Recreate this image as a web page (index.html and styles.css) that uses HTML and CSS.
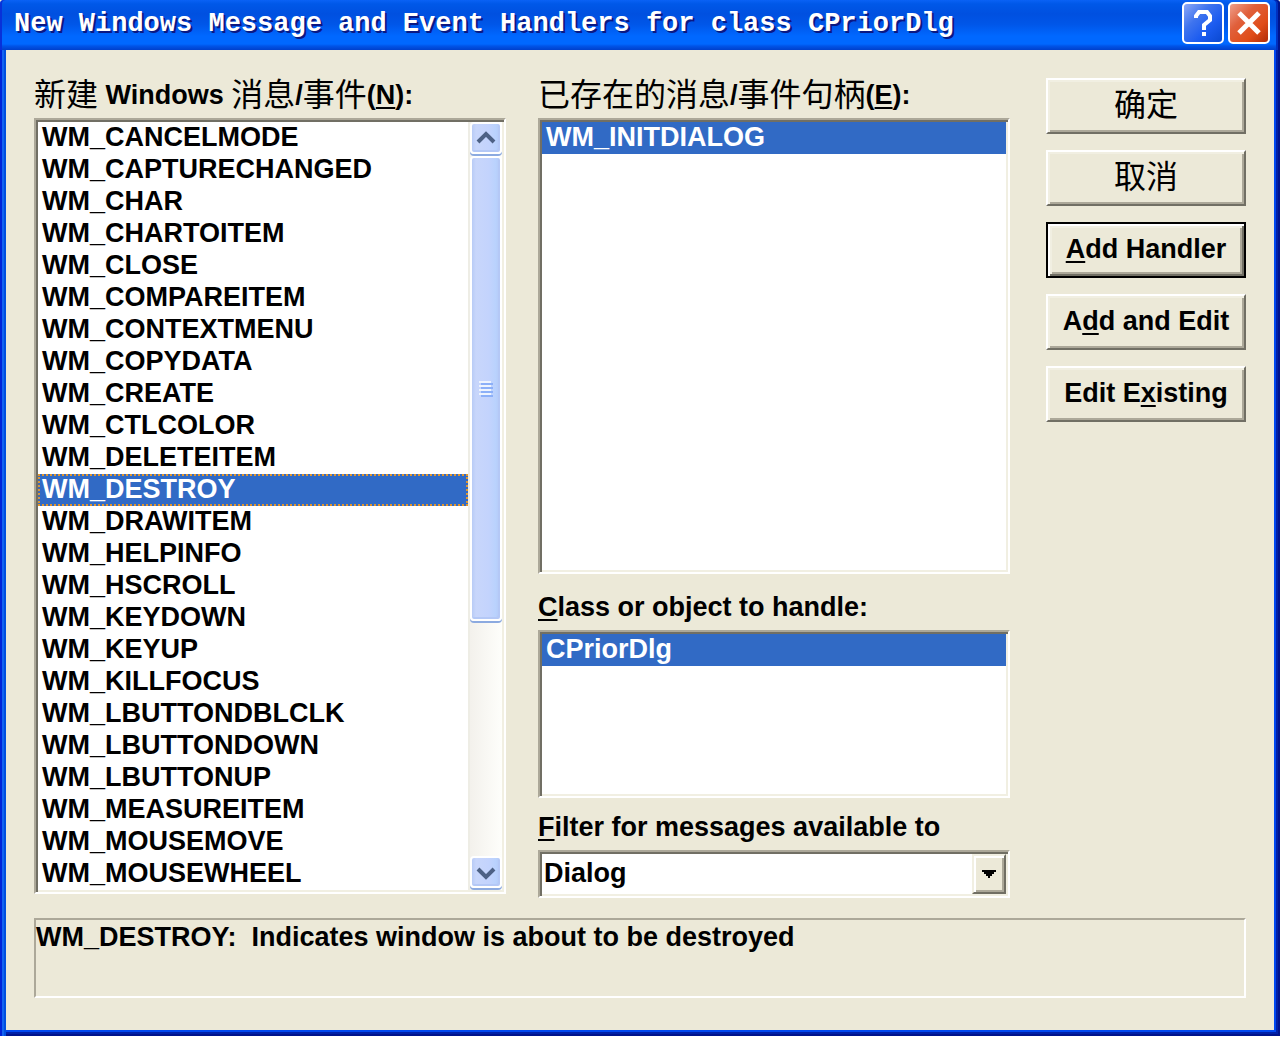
FILE: index.html
```html
<!DOCTYPE html>
<html lang="zh-CN">
<head>
    <meta charset="UTF-8">
    <meta name="viewport" content="width=device-width, initial-scale=1.0">
    <title>New Windows Message and Event Handlers for class CPriorDlg</title>
    <link rel="stylesheet" href="styles.css">
</head>
<body>
    <div class="dialog">
        <div class="title-bar">
            <h1>New Windows Message and Event Handlers for class CPriorDlg</h1>
            <button type="button" class="title-btn help" aria-label="Help">
                <svg viewBox="0 0 38 38" width="38" height="38">
                    <path d="M12 14V12L15 8H23L26 12V16L20 21V26" fill="none" stroke="#fff" stroke-width="4"/>
                    <rect x="18" y="28" width="4" height="4" fill="#fff"/>
                </svg>
            </button>
            <button type="button" class="title-btn close" aria-label="Close">
                <svg viewBox="0 0 38 38" width="38" height="38">
                    <path d="M9 9L29 29M29 9L9 29" fill="none" stroke="#fff" stroke-width="5"/>
                </svg>
            </button>
        </div>
        <form class="dialog-body">
            <div class="main">
                <div class="columns">
                    <div class="column">
                        <label class="label-top" for="new-messages"><span class="cjk">新建</span> Windows <span class="cjk">消息</span>/<span class="cjk">事件</span>(<u>N</u>):</label>
                        <div class="sunken">
                            <select id="new-messages" class="list long" size="24" accesskey="n">
                                <option>WM_CANCELMODE</option>
                                <option>WM_CAPTURECHANGED</option>
                                <option>WM_CHAR</option>
                                <option>WM_CHARTOITEM</option>
                                <option>WM_CLOSE</option>
                                <option>WM_COMPAREITEM</option>
                                <option>WM_CONTEXTMENU</option>
                                <option>WM_COPYDATA</option>
                                <option>WM_CREATE</option>
                                <option>WM_CTLCOLOR</option>
                                <option>WM_DELETEITEM</option>
                                <option selected>WM_DESTROY</option>
                                <option>WM_DRAWITEM</option>
                                <option>WM_HELPINFO</option>
                                <option>WM_HSCROLL</option>
                                <option>WM_KEYDOWN</option>
                                <option>WM_KEYUP</option>
                                <option>WM_KILLFOCUS</option>
                                <option>WM_LBUTTONDBLCLK</option>
                                <option>WM_LBUTTONDOWN</option>
                                <option>WM_LBUTTONUP</option>
                                <option>WM_MEASUREITEM</option>
                                <option>WM_MOUSEMOVE</option>
                                <option>WM_MOUSEWHEEL</option>
                            </select>
                            <div class="scrollbar">
                                <button type="button" class="scroll-btn" aria-label="Scroll up">
                                    <svg viewBox="0 0 26 26" width="26" height="26"><path d="M5 17L13 9L21 17" fill="none" stroke="#4d6185" stroke-width="4"/></svg>
                                </button>
                                <div class="thumb">
                                    <svg viewBox="0 0 14 16" width="14" height="16">
                                        <path d="M0 1H12M0 5H12M0 9H12M0 13H12" stroke="#eef4fe" stroke-width="2"/>
                                        <path d="M2 3H14M2 7H14M2 11H14M2 15H14" stroke="#8cb0f8" stroke-width="2"/>
                                    </svg>
                                </div>
                                <div class="track"></div>
                                <button type="button" class="scroll-btn" aria-label="Scroll down">
                                    <svg viewBox="0 0 26 26" width="26" height="26"><path d="M5 10L13 18L21 10" fill="none" stroke="#4d6185" stroke-width="4"/></svg>
                                </button>
                            </div>
                        </div>
                    </div>
                    <div class="column">
                        <label class="label-top" for="handlers"><span class="cjk">已存在的消息</span>/<span class="cjk">事件句柄</span>(<u>E</u>):</label>
                        <div class="sunken">
                            <select id="handlers" class="list medium" size="14" accesskey="e">
                                <option selected>WM_INITDIALOG</option>
                            </select>
                        </div>
                        <label class="label-class" for="class-list"><u>C</u>lass or object to handle:</label>
                        <div class="sunken">
                            <select id="class-list" class="list short" size="5" accesskey="c">
                                <option selected>CPriorDlg</option>
                            </select>
                        </div>
                        <label class="label-filter" for="filter"><u>F</u>ilter for messages available to</label>
                        <div class="sunken combo">
                            <select id="filter" accesskey="f">
                                <option>Dialog</option>
                            </select>
                            <span class="combo-arrow">
                                <svg viewBox="0 0 14 8" width="14" height="8"><path d="M0 0H14V2H12V4H10V6H8V8H6V6H4V4H2V2H0Z"/></svg>
                            </span>
                        </div>
                    </div>
                </div>
                <div class="buttons">
                    <button type="submit" class="btn"><span class="cjk">确定</span></button>
                    <button type="button" class="btn"><span class="cjk">取消</span></button>
                    <button type="button" class="btn default" accesskey="a"><u>A</u>dd Handler</button>
                    <button type="button" class="btn" accesskey="d">A<u>d</u>d and Edit</button>
                    <button type="button" class="btn" accesskey="x">Edit E<u>x</u>isting</button>
                </div>
            </div>
            <div class="description">WM_DESTROY:&nbsp; Indicates window is about to be destroyed</div>
        </form>
    </div>
</body>
</html>
```
FILE: styles.css
```css
* {
    box-sizing: border-box;
}

body {
    margin: 0;
    padding-right: 4px;
    background-color: #fff;
    color: #000;
    font: bold 27px/34px "Liberation Sans", "Noto Sans CJK SC", sans-serif;
}

.dialog {
    background-color: #ece9d8;
}

/* Title bar */
.title-bar {
    display: flex;
    align-items: flex-start;
    gap: 4px;
    height: 50px;
    padding: 2px 10px 0 14px;
    border-radius: 4px 4px 0 0;
    background: linear-gradient(#0a62f5 0, #0058e8 4px, #0050e0 14px, #0056e8 24px, #0068ff 36px, #0068ff 44px, #0054e8 46px, #0040cc 50px);
    box-shadow: inset 2px 0 #0831d9, inset -2px 0 #00138c, inset -4px 0 #0030c0;
}

.title-bar h1 {
    flex: 1;
    margin: 0;
    color: #fff;
    font: bold 27px/44px "Liberation Mono", monospace;
    text-shadow: 2px 2px #0a1883;
    white-space: nowrap;
}

.title-btn {
    width: 42px;
    height: 42px;
    padding: 0;
    border: 2px solid #fff;
    border-radius: 5px;
}

.title-btn svg {
    display: block;
}

.help {
    background: linear-gradient(135deg, #8ca8f8 0, #3f74ee 35%, #1c5cf0 65%, #0a48d0 100%);
}

.close {
    background: linear-gradient(135deg, #f0a08c 0, #e0603c 35%, #e04c18 70%, #b02c08 100%);
}

/* Body, with the blue window frame on three sides */
.dialog-body {
    padding: 28px 34px 38px;
    box-shadow: inset 2px 0 #0024d8, inset 4px 0 #1464f0, inset 6px 0 #0050e0,
        inset -2px -2px #00138c, inset -4px -4px #0020a8, inset -6px -6px #0048f0;
}

.main {
    display: flex;
    gap: 36px;
}

.columns {
    display: flex;
    flex: 1;
    gap: 32px;
}

.column {
    flex: 1;
    min-width: 0;
}

label {
    display: block;
    white-space: nowrap;
}

.label-top {
    height: 40px;
    line-height: 28px;
}

.label-top .cjk {
    line-height: 28px;
    vertical-align: -2px;
}

.label-class {
    padding: 16px 0 6px;
}

.label-filter {
    padding: 12px 0 6px;
}

.cjk {
    font-family: "Noto Sans CJK SC", sans-serif;
    font-size: 32px;
    font-weight: 400;
    line-height: 32px;
}

u {
    text-decoration-thickness: 2px;
    text-underline-offset: 3px;
}

.sunken {
    display: flex;
    padding: 2px;
    border: 2px solid;
    border-color: #aca899 #fff #fff #aca899;
    background-color: #fff;
    box-shadow: inset 2px 2px #716f64, inset -2px -2px #f1efe2;
}

/* List boxes */
.sunken select {
    flex: 1;
    min-width: 0;
    margin: 0;
    padding: 0;
    border: none;
    border-radius: 0;
    outline: none;
    background-color: #fff;
    color: #000;
    font: inherit;
    appearance: none;
}

.list {
    overflow: hidden;
    scrollbar-width: none;
}

.long {
    height: 768px;
}

.medium {
    height: 448px;
}

.short {
    height: 160px;
}

.list option {
    height: 32px;
    min-height: 0;
    padding: 0 4px;
    color: #000;
    font: inherit;
    line-height: 34px;
}

.list option:checked {
    background: linear-gradient(#316ac5, #316ac5);
    -webkit-text-fill-color: #fff;
}

.long option:checked {
    outline: 2px dotted #e0962e;
    outline-offset: -2px;
}

/* Scroll bar */
.scrollbar {
    display: flex;
    flex-direction: column;
    width: 34px;
    border-left: 2px solid #eeede5;
    background: linear-gradient(90deg, #f3f1ec, #fefefb);
}

.scroll-btn,
.thumb {
    display: flex;
    align-items: center;
    justify-content: center;
    padding: 0;
    border: 2px solid #fff;
    border-radius: 4px;
    background: linear-gradient(90deg, #b8cbf6 0, #c8d6fb 4px, #c3d3fd 60%, #b9d2fd 85%, #b4c8f6 100%);
    box-shadow: inset -2px -2px #b4c8f6, 0 2px #8caae0;
}

.scroll-btn {
    height: 32px;
    margin-bottom: 2px;
}

.thumb {
    flex: 464 0 0;
    margin-bottom: 2px;
}

.track {
    flex: 234 0 0;
}

/* Combo box */
.combo {
    position: relative;
}

.combo select {
    height: 40px;
    padding: 0 36px 2px 2px;
}

.combo-arrow {
    position: absolute;
    top: 2px;
    right: 2px;
    display: flex;
    align-items: center;
    justify-content: center;
    width: 34px;
    height: 40px;
    border: 2px solid;
    border-color: #f1efe2 #716f64 #716f64 #f1efe2;
    background-color: #ece9d8;
    box-shadow: inset 2px 2px #fff, inset -2px -2px #aca899;
    pointer-events: none;
}

/* Buttons */
.buttons {
    display: flex;
    flex-direction: column;
    gap: 16px;
    width: 200px;
}

.btn {
    height: 56px;
    padding: 0 0 2px;
    border: 2px solid;
    border-color: #fff #716f64 #716f64 #fff;
    background-color: #ece9d8;
    box-shadow: inset 2px 2px #f1efe2, inset -2px -2px #aca899;
    color: #000;
    font: inherit;
    white-space: nowrap;
}

.btn.default {
    border-color: #000;
    box-shadow: inset 2px 2px #fff, inset -2px -2px #716f64, inset 4px 4px #f1efe2, inset -4px -4px #aca899;
}

.description {
    min-height: 80px;
    margin-top: 20px;
    border: 2px solid;
    border-color: #aca899 #fff #fff #aca899;
}
```
